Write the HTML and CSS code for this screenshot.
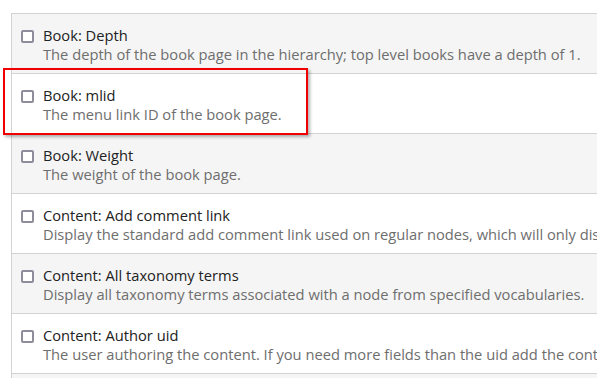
FILE: index.html
```html
<!doctype html>
<html>
    <head>
        <title>Add fields</title>
        <link rel="stylesheet" href="styles.css">
    </head>
    <body>
        <div class="field-list">
            <div class="field-row">
                <span class="check"></span>
                <div class="field-text">
                    <div class="field-label">Book: Depth</div>
                    <div class="field-desc">The depth of the book page in the hierarchy; top level books have a depth of 1.</div>
                </div>
            </div>
            <div class="field-row">
                <span class="check"></span>
                <div class="field-text">
                    <div class="field-label">Book: mlid</div>
                    <div class="field-desc">The menu link ID of the book page.</div>
                </div>
            </div>
            <div class="field-row">
                <span class="check"></span>
                <div class="field-text">
                    <div class="field-label">Book: Weight</div>
                    <div class="field-desc">The weight of the book page.</div>
                </div>
            </div>
            <div class="field-row">
                <span class="check"></span>
                <div class="field-text">
                    <div class="field-label">Content: Add comment link</div>
                    <div class="field-desc">Display the standard add comment link used on regular nodes, which will only display if the viewing user has access to add a comment.</div>
                </div>
            </div>
            <div class="field-row">
                <span class="check"></span>
                <div class="field-text">
                    <div class="field-label">Content: All taxonomy terms</div>
                    <div class="field-desc">Display all taxonomy terms associated with a node from specified vocabularies.</div>
                </div>
            </div>
            <div class="field-row">
                <span class="check"></span>
                <div class="field-text">
                    <div class="field-label">Content: Author uid</div>
                    <div class="field-desc">The user authoring the content. If you need more fields than the uid add the content: author relationship</div>
                </div>
            </div>
            <div class="field-row">
                <span class="check"></span>
                <div class="field-text">
                    <div class="field-label">Content: Body</div>
                    <div class="field-desc">The main body text of the content.</div>
                </div>
            </div>
        </div>

        <!-- highlight drawn over the mlid row -->
        <div class="highlight"></div>
    </body>
</html>
```

FILE: styles.css
```css
body {
    margin: 0;
    padding: 13px 0 0 11px;
    height: 100vh;
    box-sizing: border-box;
    overflow: hidden;
    background-color: #ffffff;
    font-family: 'Open Sans', 'DejaVu Sans', sans-serif;
    font-size: 14.7px;
    position: relative;
}

.field-list {
    width: 760px;
    border-left: 1px solid #d3d3d3;
}

.field-row {
    display: flex;
    align-items: flex-start;
    gap: 9px;
    padding: 12px 0 10px 9px;
    border-top: 1px solid #d3d3d3;
    background-color: #f5f5f5;
}

.field-row:nth-child(even) {
    background-color: #ffffff;
}

.check {
    flex: none;
    width: 9px;
    height: 9px;
    margin-top: 4px;
    border: 2px solid #8f8d9c;
    border-radius: 2px;
    background: #ffffff;
}

.field-text {
    min-width: 0;
}

.field-label {
    line-height: 18px;
    color: #222222;
}

.field-desc {
    margin-top: 1px;
    line-height: 18px;
    color: #6e6e6e;
    white-space: nowrap;
}

.highlight {
    position: absolute;
    left: 3px;
    top: 68px;
    width: 301px;
    height: 63px;
    border: 2px solid #f00000;
    box-shadow: 2px 2px 3px rgba(0, 0, 0, 0.3);
}
```
